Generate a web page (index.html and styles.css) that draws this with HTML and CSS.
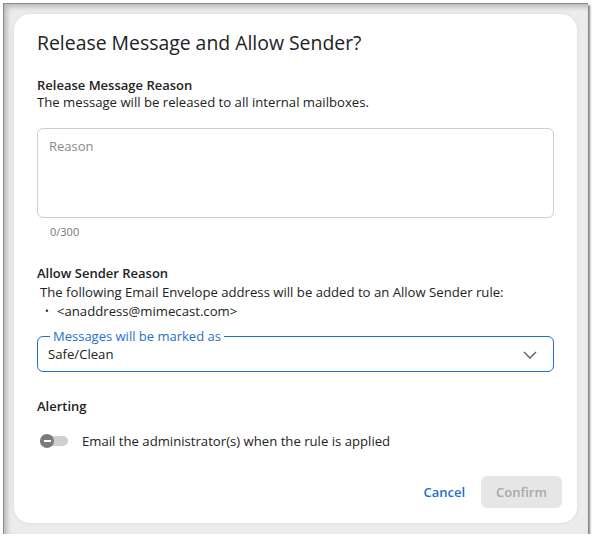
FILE: index.html
```html
<!DOCTYPE html>
<html>
<head>
<meta charset="utf-8">
<link rel="stylesheet" href="styles.css">
</head>
<body>
<div class="frame">
  <div class="card">
    <h1 class="title">Release Message and Allow Sender?</h1>

    <div class="label first">Release Message Reason</div>
    <div class="desc">The message will be released to all internal mailboxes.</div>

    <div class="textarea"><span class="placeholder">Reason</span></div>
    <div class="counter">0/300</div>

    <div class="label second">Allow Sender Reason</div>
    <div class="desc indent">The following Email Envelope address will be added to an Allow Sender rule:</div>
    <ul class="list"><li>&lt;anaddress@mimecast.com&gt;</li></ul>

    <div class="select">
      <span class="legend">Messages will be marked as</span>
      <span class="value">Safe/Clean</span>
      <svg class="chevron" width="14" height="8" viewBox="0 0 14 8"><path d="M1 1 L7 7 L13 1" fill="none" stroke="#666" stroke-width="1.5"/></svg>
    </div>

    <div class="label third">Alerting</div>
    <div class="toggle-row">
      <span class="toggle"><span class="track"></span><span class="thumb"><span class="minus"></span></span></span>
      <span class="toggle-text">Email the administrator(s) when the rule is applied</span>
    </div>

    <div class="actions">
      <button class="btn-cancel">Cancel</button>
      <button class="btn-confirm" disabled>Confirm</button>
    </div>
  </div>
</div>
</body>
</html>
```
FILE: styles.css
```css
html, body {
  margin: 0;
  padding: 0;
  background: #fff;
  font-family: "Open Sans", "Liberation Sans", sans-serif;
  color: #222;
}
.frame {
  margin: 3px 0 0 3px;
  width: 585px;
  height: 531px;
  box-sizing: border-box;
  background: #ececec;
  border-top: 1px solid #8a8a8a;
  border-left: 1px solid #8a8a8a;
  box-shadow: inset 3px 3px 5px rgba(0,0,0,0.22), 2px 2px 2px rgba(0,0,0,0.5);
  padding: 10px 0 0 10px;
}
.card {
  width: 563px;
  height: 509px;
  box-sizing: border-box;
  background: #fff;
  border-radius: 16px;
  padding: 15px 15px 15px 23px;
  box-shadow: 0 0 4px rgba(0,0,0,0.08);
}
.title {
  margin: 0;
  font-size: 19.4px;
  line-height: 28px;
  font-weight: 400;
  color: #222;
}
.label {
  font-size: 13px;
  line-height: 18px;
  font-weight: 600;
  color: #222;
}
.label.first { margin-top: 19px; }
.label.second { margin-top: 25px; line-height: 19px; }
.label.third { margin-top: 25px; }
.desc {
  font-size: 13.15px;
  line-height: 17px;
  color: #222;
}
.desc.indent { padding-left: 3px; line-height: 19px; }
.textarea {
  margin-top: 17px;
  width: 517px;
  height: 90px;
  box-sizing: border-box;
  border: 1px solid #cfcfcf;
  border-radius: 6px;
  padding: 5px 11px;
}
.placeholder {
  font-size: 13px;
  line-height: 17px;
  color: #8a8a8a;
}
.counter {
  margin-top: 7px;
  padding-left: 13px;
  font-size: 11px;
  line-height: 14px;
  color: #777;
}
.list {
  margin: 0;
  padding: 0 0 0 6px;
  list-style: none;
  font-size: 13.15px;
  line-height: 19px;
}
.list li::before {
  content: "\2022";
  display: inline-block;
  width: 14px;
  font-size: 10px;
  vertical-align: 1px;
  padding-left: 2px;
  box-sizing: border-box;
}
.select {
  position: relative;
  margin-top: 15px;
  width: 517px;
  height: 36px;
  box-sizing: border-box;
  border: 1px solid #1e6fd0;
  border-radius: 6px;
  display: flex;
  align-items: center;
  padding: 1px 16px 0 10px;
}
.legend {
  position: absolute;
  left: 12px;
  top: -9px;
  background: #fff;
  padding: 0 3px;
  font-size: 13px;
  line-height: 16px;
  color: #1e6fd0;
}
.value {
  flex: 1;
  font-size: 13.15px;
  line-height: 17px;
  color: #222;
}
.chevron { display: block; }
.toggle-row {
  margin-top: 16px;
  display: flex;
  align-items: center;
  height: 20px;
}
.toggle {
  position: relative;
  width: 28px;
  height: 14px;
  margin-left: 3px;
  display: flex;
  align-items: center;
}
.track {
  width: 28px;
  height: 10px;
  border-radius: 5px;
  background: #cfcfcf;
}
.thumb {
  position: absolute;
  left: 0;
  top: 0;
  width: 14px;
  height: 14px;
  border-radius: 50%;
  background: #7b7b7b;
  display: flex;
  align-items: center;
  justify-content: center;
}
.minus {
  width: 7px;
  height: 1.5px;
  background: #fff;
}
.toggle-text {
  margin-left: 14px;
  font-size: 13.15px;
  line-height: 17px;
  color: #222;
}
.actions {
  margin-top: 25px;
  display: flex;
  justify-content: flex-end;
  align-items: center;
  gap: 16px;
}
.btn-cancel {
  border: none;
  background: none;
  padding: 0;
  font-family: inherit;
  font-size: 13px;
  font-weight: 600;
  color: #1e6fd0;
}
.btn-confirm {
  border: none;
  width: 81px;
  height: 32px;
  border-radius: 6px;
  background: #e6e6e6;
  font-family: inherit;
  font-size: 13px;
  font-weight: 600;
  color: #a9a9a9;
}
```
